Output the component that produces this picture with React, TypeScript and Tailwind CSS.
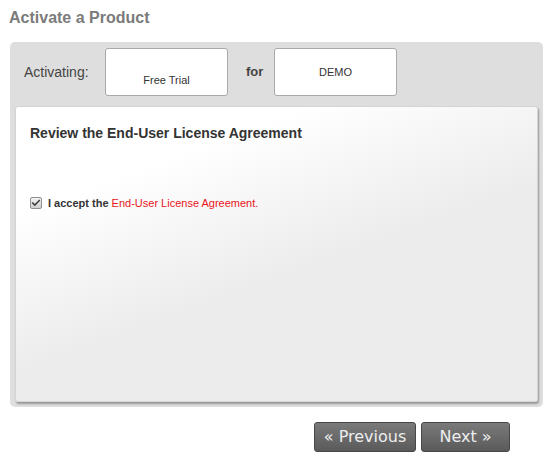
import { Check } from "lucide-react";

const App = () => {
  return (
    <div className="w-[554px] h-[463px] bg-white font-['Liberation_Sans',Arial,sans-serif] text-[#333]">
      {/* Page heading */}
      <h1 className="pl-[9px] pt-[8px] text-[16px] font-bold leading-[20px] text-[#7b7b7b]">
        Activate a Product
      </h1>

      {/* Gray wizard panel */}
      <div className="ml-[10px] mt-[14px] w-[533px] rounded-[5px] bg-[#dedede] px-[5px] pt-[6px] pb-[5px]">
        <div className="flex h-[48px] items-center">
          <span className="ml-[9px] w-[81px] text-[14px] text-[#444]">Activating:</span>
          <div className="flex h-[48px] w-[123px] items-end justify-center rounded-[3px] border border-[#a9a9a9] bg-white pb-[7px] text-[11px] text-[#333]">
            Free Trial
          </div>
          <span className="ml-[18px] w-[28px] text-[13px] font-bold text-[#444]">for</span>
          <div className="flex h-[48px] w-[123px] items-center justify-center rounded-[3px] border border-[#a9a9a9] bg-white text-[11px] text-[#333]">
            DEMO
          </div>
        </div>

        {/* License card */}
        <div className="mt-[10px] h-[296px] rounded-[3px] border border-[#d4d4d4] bg-[linear-gradient(160deg,#ffffff_22%,#ececec_55%)] px-[14px] pt-[17px] shadow-[1px_2px_2px_#999]">
          <h2 className="text-[14px] font-bold leading-[18px] text-[#333]">
            Review the End-User License Agreement
          </h2>
          <label className="mt-[53px] flex items-center text-[11px]">
            <span className="mr-[6px] flex h-[12px] w-[12px] items-center justify-center rounded-[2px] border border-[#8f8f8f] bg-[linear-gradient(#f2f2f2,#cfcfcf)]">
              <Check className="h-[10px] w-[10px] text-[#444]" strokeWidth={4} />
            </span>
            <span className="font-bold text-[#333]">I accept the&nbsp;</span>
            <span className="text-[#e8151b]">End-User License Agreement.</span>
          </label>
        </div>
      </div>

      {/* Navigation buttons */}
      <div className="mt-[15px] flex justify-end gap-[5px] pr-[44px] font-['DejaVu_Sans',Verdana,sans-serif]">
        <button className="h-[30px] w-[102px] rounded-[3px] border border-[#474747] bg-[linear-gradient(#7a7a7a,#5a5a5a)] text-[16px] text-[#eeeeee]">
          « Previous
        </button>
        <button className="h-[30px] w-[89px] rounded-[3px] border border-[#474747] bg-[linear-gradient(#7a7a7a,#5a5a5a)] text-[16px] text-[#eeeeee]">
          Next »
        </button>
      </div>
    </div>
  );
};

export default App;
